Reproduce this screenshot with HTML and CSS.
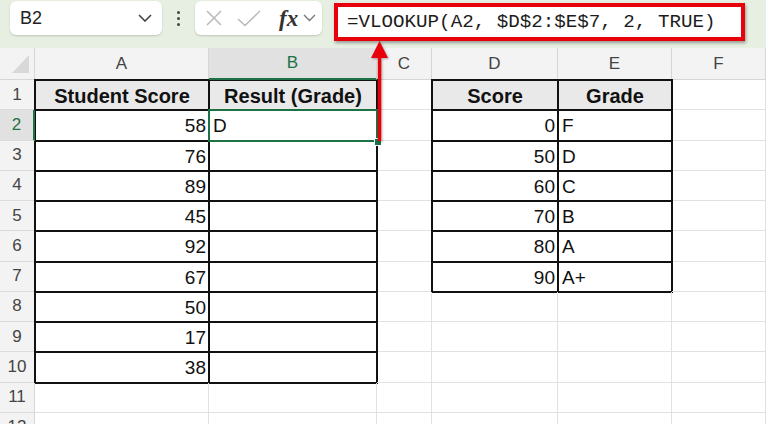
FILE: index.html
```html
<!DOCTYPE html>
<html>
<head>
<meta charset="utf-8">
<link rel="stylesheet" href="styles.css">
</head>
<body>
<div class="page">
  <div class="toolbar">
    <div class="namebox">
      <span class="ref">B2</span>
      <svg class="chev" width="14" height="8" viewBox="0 0 14 8"><polyline points="1,1 7,7 13,1" fill="none" stroke="#444" stroke-width="1.6"/></svg>
    </div>
    <div class="dots"><i></i><i></i><i></i></div>
    <div class="fxbox">
      <svg class="ico-x" width="18" height="18" viewBox="0 0 18 18"><path d="M2 2 L16 16 M16 2 L2 16" stroke="#b9b9b9" stroke-width="1.5" fill="none"/></svg>
      <svg class="ico-ok" width="26" height="18" viewBox="0 0 26 18"><polyline points="2,10 9,16.5 24,2" fill="none" stroke="#b9b9b9" stroke-width="1.5"/></svg>
      <span class="fx">fx</span>
      <svg class="ico-chev" width="13" height="8" viewBox="0 0 13 8"><polyline points="1,1 6.5,6.5 12,1" fill="none" stroke="#777" stroke-width="1.4"/></svg>
    </div>
    <div class="formula">=VLOOKUP(A2, $D$2:$E$7, 2, TRUE)</div>
  </div>

  <div class="sheet">
    <div class="corner"><span class="tri"></span></div>
    <div class="ch">A</div><div class="ch sel">B</div><div class="ch">C</div><div class="ch">D</div><div class="ch">E</div><div class="ch">F</div>

    <div class="rh">1</div>
    <div class="c b th">Student Score</div><div class="c b th">Result (Grade)</div><div class="c"></div><div class="c b th">Score</div><div class="c b th">Grade</div><div class="c"></div>

    <div class="rh sel">2</div>
    <div class="c b num">58</div><div class="c b active">D</div><div class="c"></div><div class="c b num">0</div><div class="c b">F</div><div class="c"></div>

    <div class="rh">3</div>
    <div class="c b num">76</div><div class="c b"></div><div class="c"></div><div class="c b num">50</div><div class="c b">D</div><div class="c"></div>

    <div class="rh">4</div>
    <div class="c b num">89</div><div class="c b"></div><div class="c"></div><div class="c b num">60</div><div class="c b">C</div><div class="c"></div>

    <div class="rh">5</div>
    <div class="c b num">45</div><div class="c b"></div><div class="c"></div><div class="c b num">70</div><div class="c b">B</div><div class="c"></div>

    <div class="rh">6</div>
    <div class="c b num">92</div><div class="c b"></div><div class="c"></div><div class="c b num">80</div><div class="c b">A</div><div class="c"></div>

    <div class="rh">7</div>
    <div class="c b num">67</div><div class="c b"></div><div class="c"></div><div class="c b num">90</div><div class="c b">A+</div><div class="c"></div>

    <div class="rh">8</div>
    <div class="c b num">50</div><div class="c b"></div><div class="c"></div><div class="c"></div><div class="c"></div><div class="c"></div>

    <div class="rh">9</div>
    <div class="c b num">17</div><div class="c b"></div><div class="c"></div><div class="c"></div><div class="c"></div><div class="c"></div>

    <div class="rh">10</div>
    <div class="c b num">38</div><div class="c b"></div><div class="c"></div><div class="c"></div><div class="c"></div><div class="c"></div>

    <div class="rh">11</div>
    <div class="c"></div><div class="c"></div><div class="c"></div><div class="c"></div><div class="c"></div><div class="c"></div>

    <div class="rh">12</div>
    <div class="c"></div><div class="c"></div><div class="c"></div><div class="c"></div><div class="c"></div><div class="c"></div>
  </div>

  <svg class="arrow" width="766" height="424" viewBox="0 0 766 424">
    <line x1="379.5" y1="52" x2="379.5" y2="141" stroke="#e8000b" stroke-width="3.5"/>
    <polygon points="379.5,41 371,58 388,58" fill="#e8000b"/>
  </svg>
</div>
</body>
</html>
```

FILE: styles.css
```css
html, body {
  margin: 0;
  padding: 0;
  background: #fff;
}
.page {
  position: relative;
  width: 766px;
  height: 424px;
  overflow: hidden;
  font-family: "Liberation Sans", Arial, sans-serif;
}
.toolbar {
  height: 48px;
  background: #e7efe2;
  display: flex;
  align-items: flex-start;
  box-sizing: border-box;
}
.namebox {
  margin-left: 10px;
  margin-top: 1px;
  width: 152px;
  height: 34px;
  background: #fff;
  border-radius: 6px;
  box-shadow: 0 1px 2px rgba(0,0,0,0.18);
  display: flex;
  align-items: center;
  justify-content: space-between;
  padding: 0 10px 0 10px;
  box-sizing: border-box;
}
.ref {
  font-size: 18px;
  color: #222;
}
.dots {
  width: 33px;
  height: 34px;
  margin-top: 1px;
  display: flex;
  flex-direction: column;
  align-items: center;
  justify-content: center;
  gap: 3px;
}
.dots i {
  display: block;
  width: 3px;
  height: 3px;
  background: #444;
  border-radius: 50%;
}
.fxbox {
  margin-top: 1px;
  width: 127px;
  height: 34px;
  background: #fff;
  border-radius: 6px;
  box-shadow: 0 1px 2px rgba(0,0,0,0.18);
  display: flex;
  align-items: center;
  padding-left: 10px;
  box-sizing: border-box;
}
.ico-ok {
  margin-left: 13px;
}
.fx {
  font-family: "Liberation Serif", "Times New Roman", serif;
  font-style: italic;
  font-weight: bold;
  font-size: 23px;
  color: #333;
  margin-left: 17px;
  line-height: 1;
}
.ico-chev {
  margin-left: 5px;
}
.formula {
  margin-left: 12px;
  margin-top: 3px;
  width: 411px;
  height: 38px;
  box-sizing: border-box;
  border: 4px solid #e8000b;
  background: #fff;
  box-shadow: 1px 2px 3px rgba(0,0,0,0.35);
  font-family: "Liberation Mono", "Courier New", monospace;
  font-size: 19.2px;
  color: #1c1c1c;
  display: flex;
  align-items: center;
  padding-left: 9px;
  white-space: pre;
}
.sheet {
  display: grid;
  grid-template-columns: 35px 174px 168px 55px 126px 114px 1fr;
  grid-template-rows: 32px repeat(12, 30.25px);
}
.corner {
  background: #f3f3f3;
  border-right: 1px solid #d6d6d6;
  border-bottom: 1px solid #d6d6d6;
  box-sizing: border-box;
  display: flex;
  align-items: flex-end;
  justify-content: flex-end;
  padding: 0 5px 6px 0;
}
.tri {
  display: block;
  width: 0;
  height: 0;
  border-left: 17px solid transparent;
  border-bottom: 18px solid #d8d8d8;
}
.ch {
  background: #f3f3f3;
  border-right: 1px solid #d6d6d6;
  border-bottom: 1px solid #d6d6d6;
  box-sizing: border-box;
  display: flex;
  align-items: center;
  justify-content: center;
  font-size: 17px;
  color: #444;
}
.ch.sel {
  position: relative;
  z-index: 1;
  background: #e1e1e1;
  color: #1e7145;
  border-bottom: 2px solid #1e7145;
}
.rh {
  background: #f3f3f3;
  border-right: 1px solid #d6d6d6;
  border-bottom: 1px solid #dcdcdc;
  box-sizing: border-box;
  display: flex;
  align-items: center;
  justify-content: center;
  font-size: 17px;
  color: #444;
}
.rh.sel {
  position: relative;
  z-index: 1;
  background: #e1e1e1;
  color: #1e7145;
  border-right: 2px solid #1e7145;
}
.c {
  border-right: 1px solid #e1e1e1;
  border-bottom: 1px solid #e1e1e1;
  box-sizing: border-box;
  display: flex;
  align-items: center;
  font-size: 19px;
  color: #111;
  padding: 2px 4px 0 4px;
  white-space: nowrap;
}
.c.b {
  border: 0;
  background: #fff;
  box-shadow: inset 0 0 0 1px #111, 0 0 0 1px #111;
}
.c.th {
  background: #e9e9e9;
  font-weight: bold;
  font-size: 20px;
  justify-content: center;
}
.c.num {
  justify-content: flex-end;
  padding-right: 3px;
}
.c.active {
  position: relative;
  z-index: 2;
  outline: 2px solid #1e7145;
  outline-offset: -1px;
}
.c.active::after {
  content: "";
  position: absolute;
  right: -5px;
  bottom: -5px;
  width: 6px;
  height: 6px;
  background: #1e7145;
  border: 1px solid #fff;
}
.arrow {
  position: absolute;
  left: 0;
  top: 0;
  pointer-events: none;
  z-index: 5;
  filter: drop-shadow(1px 1px 1px rgba(0,0,0,0.3));
}
```
